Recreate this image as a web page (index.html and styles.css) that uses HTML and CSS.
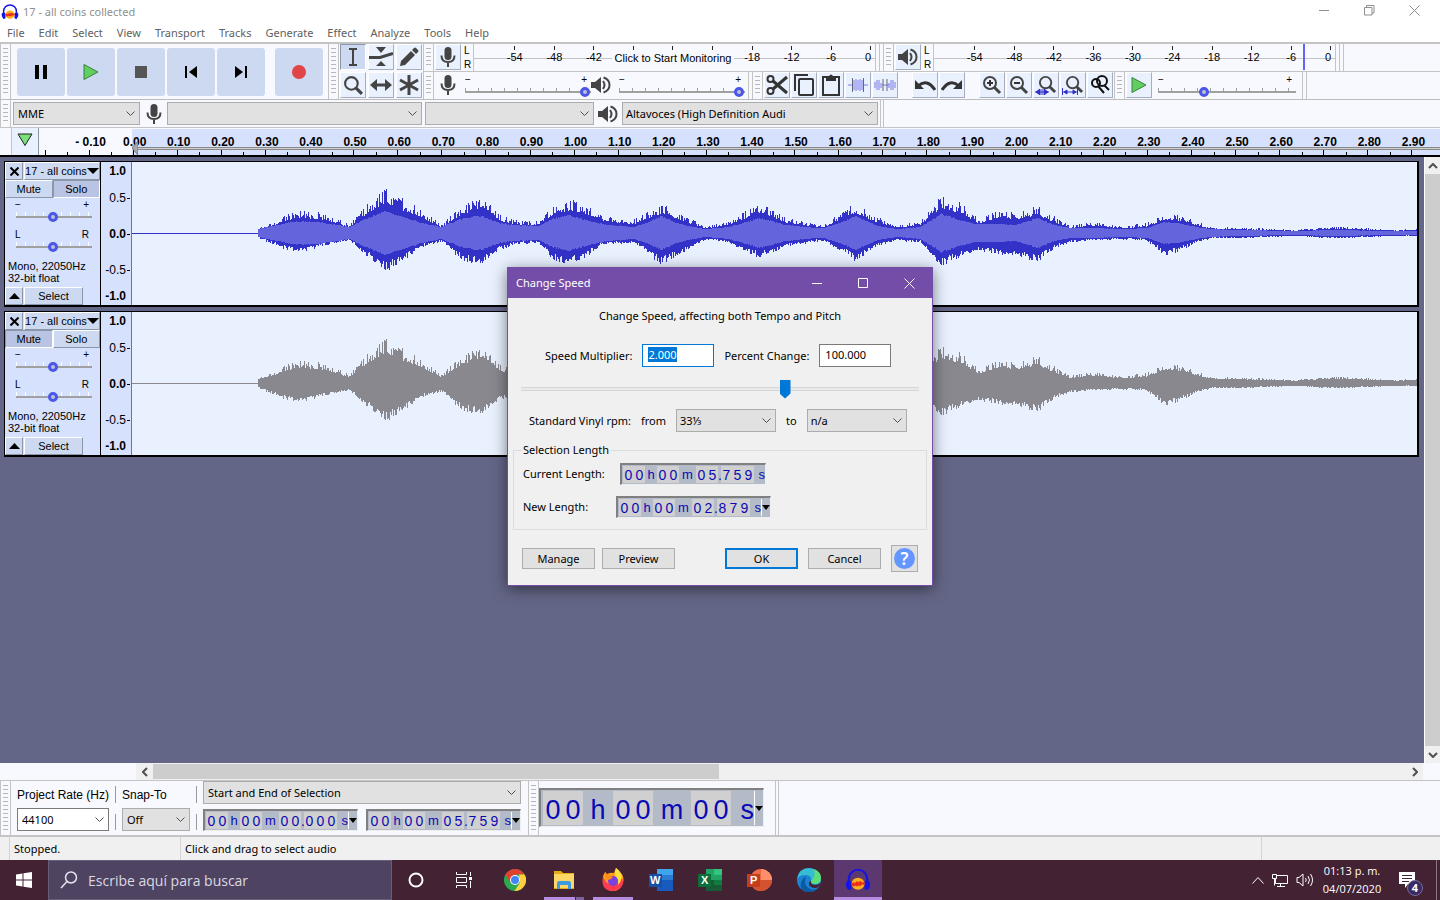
FILE: index.html
```html
<!DOCTYPE html>
<html lang="en">
<head>
    <meta charset="UTF-8">
    <meta name="viewport" content="width=device-width, initial-scale=1.0">
    <title>17 - all coins collected</title>
    <link rel="stylesheet" href="styles.css">
</head>
<body>

<!-- shared icons -->
<svg class="sprite" aria-hidden="true">
    <symbol id="i-audacity" viewBox="0 0 24 24">
        <path d="M3.500 16V11a8.500 8.500 0 0 1 17 0v5" fill="none" stroke="#1414e6" stroke-width="2"/>
        <path d="M1 14q3-3 5 0v6q-2 2-3 1-3-3-2-7zM23 14q-3-3-5 0v6q2 2 3 1 3-3 2-7z" fill="#1414e6"/>
        <ellipse cx="12" cy="15.500" rx="6" ry="5.500" fill="#f9b01c"/>
        <path d="M6 15l2-1 1 1 2-2 1 1 2-1 2 1 2 0v3l-2-1-2 2-1-1-2 1-1-1-2 1-2-1z" fill="#f0301c"/>
    </symbol>
    <symbol id="i-mic" viewBox="0 0 16 20">
        <rect x="4.500" y="0" width="7" height="13" rx="3.500" fill="#444"/>
        <path d="M1.500 8.500q0 6.500 6.500 6.500t6.500-6.500M8 15v5" fill="none" stroke="#444" stroke-width="2"/>
    </symbol>
    <symbol id="i-speaker" viewBox="0 0 20 18">
        <path d="M0 6h4l6-5v16l-6-5H0z" fill="#444"/>
        <path d="M12 5q3 4 0 8M12.500 1.500q6 2 6 7.500t-6 7.500" fill="none" stroke="#444" stroke-width="2"/>
    </symbol>
    <symbol id="i-play" viewBox="0 0 16 18">
        <path d="M1 1.500L15 9 1 16.500z" fill="#5fcf5f" stroke="#3f7f3f"/>
    </symbol>
    <symbol id="i-lens" viewBox="0 0 20 20">
        <circle cx="8" cy="8" r="6" fill="none" stroke="#444" stroke-width="2"/>
        <path d="M12 12l6 6" stroke="#444" stroke-width="3"/>
    </symbol>
    <symbol id="i-up" viewBox="0 0 10 6">
        <path d="M1 5l4-4 4 4" fill="none" stroke="#505050" stroke-width="2"/>
    </symbol>
</svg>

<header class="titlebar">
    <svg width="18" height="18"><use href="#i-audacity"/></svg>
    <span class="app-title">17 - all coins collected</span>
    <div class="window-buttons">
        <button aria-label="Minimize"><svg width="11" height="11"><path d="M0 5.500h10"/></svg></button>
        <button aria-label="Restore"><svg width="11" height="11"><path d="M.5 2.500h7.500v7.500H.5zM2.500 2.500V.5H10v7.500H8"/></svg></button>
        <button aria-label="Close"><svg width="11" height="11"><path d="M.5 .5l10 10M10.500 .5l-10 10"/></svg></button>
    </div>
</header>

<nav class="menubar">
    <a href="#">File</a><a href="#">Edit</a><a href="#">Select</a><a href="#">View</a><a href="#">Transport</a><a href="#">Tracks</a><a href="#">Generate</a><a href="#">Effect</a><a href="#">Analyze</a><a href="#">Tools</a><a href="#">Help</a>
</nav>

<div class="toolbars">
    <div class="grip"></div>
    <div class="transport">
        <button aria-label="Pause"><svg width="14" height="14"><path d="M1 0h4v14H1zM9 0h4v14H9z"/></svg></button>
        <button aria-label="Play"><svg width="16" height="18"><use href="#i-play"/></svg></button>
        <button aria-label="Stop"><svg width="12" height="12"><path d="M0 0h12v12H0z" fill="#555"/></svg></button>
        <button aria-label="Skip to start"><svg width="14" height="14"><path d="M1 1h2v12H1zM13 1v12L5 7z"/></svg></button>
        <button aria-label="Skip to end"><svg width="14" height="14"><path d="M11 1h2v12h-2zM1 1v12l8-6z"/></svg></button>
        <button class="record" aria-label="Record"><svg width="14" height="14"><circle cx="7" cy="7" r="7" fill="#e14545"/></svg></button>
    </div>
    <div class="grip"></div>
    <div class="tools">
        <button class="tool pressed" aria-label="Selection"><svg width="12" height="18"><path d="M2 1h3l1 1 1-1h3M6 2v14M2 17h3l1-1 1 1h3" fill="none" stroke="#444" stroke-width="2"/></svg></button>
        <button class="tool" aria-label="Envelope"><svg width="24" height="20"><path d="M7 0h10l-5 6zM12 14l5 5H7z" fill="#444"/><path d="M0 10.500h11l13-4" fill="none" stroke="#444" stroke-width="3"/></svg></button>
        <button class="tool" aria-label="Draw"><svg width="20" height="20"><path d="M1 19l1-5L12 4l4 4L6 18zM13 3l2-2q1-1 2 0l2 2q1 1 0 2l-2 2z" fill="#444"/></svg></button>
        <button class="tool" aria-label="Zoom"><svg width="21" height="21"><use href="#i-lens"/></svg></button>
        <button class="tool" aria-label="Time shift"><svg width="22" height="14"><path d="M0 7l7-6v12zM22 7l-7-6v12z" fill="#444"/><path d="M5 7h12" stroke="#444" stroke-width="3"/></svg></button>
        <button class="tool" aria-label="Multi-tool"><svg width="20" height="20"><path d="M10 0v20M1 5l18 10M19 5L1 15" stroke="#444" stroke-width="3"/></svg></button>
    </div>
    <div class="toolbar-rows">
        <div class="toolbar-row">
            <div class="grip"></div>
            <button class="tool" aria-label="Recording meter"><svg width="16" height="20"><use href="#i-mic"/></svg></button>
            <div class="channels"><span>L</span><span>R</span></div>
            <div class="meter">
                <span>-54</span><span>-48</span><span>-42</span><span></span><span></span><span></span><span>-18</span><span>-12</span><span>-6</span><span>0</span>
                <button class="monitor">Click to Start Monitoring</button>
            </div>
            <div class="dock-line"></div>
            <div class="grip"></div>
            <button class="tool" aria-label="Playback meter"><svg width="20" height="18"><use href="#i-speaker"/></svg></button>
            <div class="channels"><span>L</span><span>R</span></div>
            <div class="meter">
                <span>-54</span><span>-48</span><span>-42</span><span>-36</span><span>-30</span><span>-24</span><span>-18</span><span>-12</span><span>-6</span><span>0</span>
                <i class="peak"></i>
            </div>
            <div class="dock-line"></div><div class="dock-edge"></div>
        </div>
        <div class="toolbar-row">
            <div class="grip"></div>
            <svg class="mixer-icon" width="16" height="20"><use href="#i-mic"/></svg>
            <label class="slider mixer"><span>−</span><span>+</span><input type="range" min="0" max="100" value="99" aria-label="Recording volume"></label>
            <svg class="mixer-speaker" width="20" height="18"><use href="#i-speaker"/></svg>
            <label class="slider mixer"><span>−</span><span>+</span><input type="range" min="0" max="100" value="99" aria-label="Playback volume"></label>
            <div class="dock-line"></div>
            <div class="grip"></div>
            <div class="edit-tools">
                <button class="tool" aria-label="Cut"><svg width="22" height="20" fill="none" stroke="#333" stroke-width="2"><circle cx="4.500" cy="4" r="3"/><circle cx="4.500" cy="16" r="3"/><path d="M7 6l14 12M7 14L21 2" stroke-width="3"/></svg></button>
                <button class="tool" aria-label="Copy"><svg width="20" height="22" fill="none" stroke="#333" stroke-width="2"><path d="M1 17V1h13M6 5h12q1 0 1 1v14q0 1-1 1H6q-1 0-1-1V6q0-1 1-1z"/></svg></button>
                <button class="tool" aria-label="Paste"><svg width="18" height="22" fill="none" stroke="#333" stroke-width="2"><path d="M1 3h16v18H1z"/><path d="M4 2h3q2-3 4 0h3v5H4z" fill="#333" stroke="none"/></svg></button>
                <button class="tool" aria-label="Trim"><svg width="20" height="14" fill="none"><path d="M0 7h4M16 7h4M6 2v10M8 1v12M10 2v10M12 1v12M14 2v10" stroke="#7a7ae8"/><path d="M4.500 0v14M15.500 0v14" stroke="#667"/></svg></button>
                <button class="tool" aria-label="Silence"><svg width="22" height="14" fill="none"><path d="M1 4v6M3 2v10M5 2v10M7 5v5M15 5v5M17 2v10M19 2v10M21 4v6M8 7h7" stroke="#7a7ae8"/><path d="M9 1v12M13 1v12" stroke="#667"/></svg></button>
            </div>
            <div class="edit-tools">
                <button class="tool" aria-label="Undo"><svg width="22" height="14"><path d="M1 2v9h9z" fill="#333"/><path d="M4 8q9-8 17 4" fill="none" stroke="#333" stroke-width="3"/></svg></button>
                <button class="tool" aria-label="Redo"><svg width="22" height="14"><path d="M21 2v9h-9z" fill="#333"/><path d="M18 8q-9-8-17 4" fill="none" stroke="#333" stroke-width="3"/></svg></button>
            </div>
            <div class="edit-tools">
                <button class="tool" aria-label="Zoom in"><svg width="20" height="20"><use href="#i-lens"/><path d="M5 8h6M8 5v6" stroke="#333" stroke-width="2"/></svg></button>
                <button class="tool" aria-label="Zoom out"><svg width="20" height="20"><use href="#i-lens"/><path d="M5 8h6" stroke="#333" stroke-width="2"/></svg></button>
                <button class="tool" aria-label="Fit selection"><svg width="22" height="20"><use href="#i-lens" x="3" width="19" height="19"/><path d="M1 17l4-3v6zM13 17l-4-3v6zM0 17h14M7 14v6" fill="#3030c8" stroke="#3030c8"/></svg></button>
                <button class="tool" aria-label="Fit project"><svg width="22" height="20"><use href="#i-lens" x="3" width="19" height="19"/><path d="M.5 13v7M15.500 13v7M1 17h14M2 17l3-2v4zM14 17l-3-2v4z" fill="#3030c8" stroke="#3030c8"/></svg></button>
                <button class="tool" aria-label="Zoom toggle"><svg width="20" height="20" fill="none" stroke="#111" stroke-width="2"><circle cx="6" cy="8" r="4"/><circle cx="12" cy="6" r="5"/><path d="M8 11l6 7M14 10l5 5"/></svg></button>
            </div>
            <div class="grip"></div>
            <button class="tool" aria-label="Play at speed"><svg width="16" height="18"><use href="#i-play"/></svg></button>
            <label class="slider mixer speed"><span>−</span><span>+</span><input type="range" min="0" max="100" value="32" aria-label="Playback speed"></label>
            <div class="dock-line"></div><div class="dock-edge"></div>
        </div>
    </div>
</div>

<div class="devices">
    <div class="grip"></div>
    <select class="host" aria-label="Audio host"><option>MME</option></select>
    <svg width="16" height="20"><use href="#i-mic"/></svg>
    <select class="rec-device" aria-label="Recording device"><option></option></select>
    <select class="rec-channels" aria-label="Recording channels"><option></option></select>
    <svg width="20" height="18"><use href="#i-speaker"/></svg>
    <select class="play-device" aria-label="Playback device"><option>Altavoces (High Definition Audi</option></select>
    <div class="dock-edge"></div><div class="dock-edge"></div>
</div>

<div class="timeline">
    <div class="timeline-grip"></div>
    <button class="pin" aria-label="Pinned play head"><svg width="16" height="14"><path d="M1 1h14L8 12.500z" fill="#7be07b" stroke="#222"/></svg></button>
    <div class="timeline-ruler">
        <div class="ruler-labels" id="timeRuler"></div>
        <svg class="play-start" width="6" height="14"><path d="M6 0v14L0 7z" fill="#aaa" stroke="#777"/></svg>
    </div>
</div>

<main class="workspace">
    <div class="tracks">
        <section class="track">
            <div class="track-panel">
                <div class="panel-row">
                    <button class="panel-btn close" aria-label="Close track"><svg width="9" height="9"><path d="M.5 .5l8 8M8.500 .5l-8 8" stroke="#000" stroke-width="2"/></svg></button>
                    <button class="panel-btn name">17 - all coins<svg width="12" height="6"><path d="M0 0h12L6 6z"/></svg></button>
                </div>
                <div class="panel-row">
                    <button class="panel-btn half">Mute</button>
                    <button class="panel-btn half down">Solo</button>
                </div>
                <label class="slider"><span>−</span><span>+</span><input type="range" value="49" aria-label="Gain"></label>
                <label class="slider pan"><span>L</span><span>R</span><input type="range" value="49" aria-label="Pan"></label>
                <p>Mono, 22050Hz<br>32-bit float</p>
                <div class="panel-row">
                    <button class="panel-btn close" aria-label="Collapse"><svg width="11" height="6"><path d="M0 6h11L5.500 0z"/></svg></button>
                    <button class="panel-btn select">Select</button>
                </div>
            </div>
            <div class="level-ruler"><b>1.0</b><span>0.5</span><b>0.0</b><span>-0.5</span><b>-1.0</b></div>
            <svg class="wave" viewBox="0 0 1285 143" preserveAspectRatio="none"></svg>
        </section>
        <section class="track">
            <div class="track-panel">
                <div class="panel-row">
                    <button class="panel-btn close" aria-label="Close track"><svg width="9" height="9"><path d="M.5 .5l8 8M8.500 .5l-8 8" stroke="#000" stroke-width="2"/></svg></button>
                    <button class="panel-btn name">17 - all coins<svg width="12" height="6"><path d="M0 0h12L6 6z"/></svg></button>
                </div>
                <div class="panel-row">
                    <button class="panel-btn half down">Mute</button>
                    <button class="panel-btn half">Solo</button>
                </div>
                <label class="slider"><span>−</span><span>+</span><input type="range" value="49" aria-label="Gain"></label>
                <label class="slider pan"><span>L</span><span>R</span><input type="range" value="49" aria-label="Pan"></label>
                <p>Mono, 22050Hz<br>32-bit float</p>
                <div class="panel-row">
                    <button class="panel-btn close" aria-label="Collapse"><svg width="11" height="6"><path d="M0 6h11L5.500 0z"/></svg></button>
                    <button class="panel-btn select">Select</button>
                </div>
            </div>
            <div class="level-ruler"><b>1.0</b><span>0.5</span><b>0.0</b><span>-0.5</span><b>-1.0</b></div>
            <svg class="wave muted" viewBox="0 0 1285 143" preserveAspectRatio="none"></svg>
        </section>
    </div>
    <div class="vscroll">
        <button aria-label="Scroll up"><svg width="10" height="6"><use href="#i-up"/></svg></button>
        <div class="vthumb"></div>
        <button class="flip" aria-label="Scroll down"><svg width="10" height="6"><use href="#i-up"/></svg></button>
    </div>
</main>

<div class="hscroll">
    <button class="left" aria-label="Scroll left"><svg width="10" height="6"><use href="#i-up"/></svg></button>
    <div class="hthumb"></div>
    <button class="right" aria-label="Scroll right"><svg width="10" height="6"><use href="#i-up"/></svg></button>
</div>

<div class="selection-bar">
    <div class="grip"></div>
    <div class="field rate">
        <label for="rate">Project Rate (Hz)</label>
        <select id="rate" class="white"><option>44100</option></select>
    </div>
    <div class="divider"></div>
    <div class="field snap">
        <label for="snap">Snap-To</label>
        <select id="snap"><option>Off</option></select>
    </div>
    <div class="divider"></div>
    <div class="field range">
        <select aria-label="Selection mode"><option>Start and End of Selection</option></select>
        <div class="times">
            <div class="time" data-value="00h00m00.000s" data-menu="1"></div>
            <div class="time" data-value="00h00m05.759s" data-menu="1"></div>
        </div>
    </div>
    <div class="grip"></div>
    <div class="time big" data-value="00h00m00s" data-menu="1"></div>
    <div class="dock-edge"></div><div class="dock-edge"></div>
</div>

<footer class="statusbar">
    <span class="state">Stopped.</span>
    <span class="hint">Click and drag to select audio</span>
    <span class="extra"></span>
</footer>

<div class="taskbar">
    <button class="start" aria-label="Start"><svg width="16" height="16" fill="#fff"><path d="M0 2.500l6.500-1v6H0zM7.500 1.300L16 0v7.500H7.500zM0 8.500h6.500v6L0 13.500zM7.500 8.500H16V16l-8.500-1.300z"/></svg></button>
    <label class="search">
        <svg width="18" height="18" fill="none" stroke="#e8e4ee" stroke-width="1.500"><circle cx="11" cy="6.500" r="5.500"/><path d="M7 10.500L1 17"/></svg>
        <input type="text" placeholder="Escribe aquí para buscar">
    </label>
    <button class="app" aria-label="Cortana"><svg width="18" height="18"><circle cx="9" cy="9" r="6.500" fill="none" stroke="#fff" stroke-width="2"/></svg></button>
    <button class="app view" aria-label="Task view"><svg width="18" height="16" fill="none" stroke="#fff"><path d="M1.500 0v2.500h10V0M1.500 5.500h10v5h-10zM1.500 16v-2.500h10V16M15.500 0v4M15.500 9v7"/><path d="M14 5h3v3h-3z" fill="#fff" stroke="none"/></svg></button>
    <button class="app" aria-label="Chrome"><svg width="22" height="22" viewBox="0 0 22 22"><circle cx="11" cy="11" r="11" fill="#2da94f"/><path d="M1.500 5.500A11 11 0 0 1 20.500 5.500H11l-5 8z" fill="#e2402f"/><path d="M20.500 5.500A11 11 0 0 1 10.500 22l5.500-8.500-1-8z" fill="#fdd23e"/><circle cx="11" cy="11" r="5" fill="#fff"/><circle cx="11" cy="11" r="4" fill="#4285f4"/></svg></button>
    <button class="app open stacked" aria-label="File Explorer"><svg width="22" height="20"><path d="M1 1h7l2 2h11v16H1z" fill="#e8a916"/><path d="M1 4h20v14H1z" fill="#fcd667"/><path d="M4 19v-6q0-2 2-2h10q2 0 2 2v6h-3v-4H7v4z" fill="#3f9be0"/></svg></button>
    <button class="app open" aria-label="Firefox"><svg width="24" height="24" viewBox="0 0 24 24"><path d="M2 8l2-4 2 2q4-2 7-1l2-5q3 3 4 5l2 1q3 6 0 11-3 6-9 6T3 18q-2-5-1-10z" fill="#ff9c1a"/><path d="M2 8q1 5 6 8 5 2 9-2 3-4 0-8 6 5 5 10-3 7-10 7Q3 23 1.500 15z" fill="#ff3b51"/><path d="M15 0q5 3 6 9-1 5-4 8 1-6-3-9-1-4 1-8z" fill="#ffdf3d"/><circle cx="12" cy="13" r="5" fill="#7b41dd"/><path d="M4 4q3 4 8 5-2 3-5 3-3-3-3-8z" fill="#ff8a16"/></svg></button>
    <button class="app" aria-label="Word"><svg width="26" height="22"><path d="M8 0h16v22H8z" fill="#185abd"/><path d="M8 0h16v6H8z" fill="#41a5ee"/><path d="M8 6h16v5H8z" fill="#2b7cd3"/><path d="M0 5h13v13H0z" fill="#1550a8"/><text x="1" y="15" class="office">W</text></svg></button>
    <button class="app" aria-label="Excel"><svg width="26" height="22"><path d="M8 0h16v22H8z" fill="#21a366"/><path d="M16 0h8v6h-8z" fill="#33c481"/><path d="M8 11h16v11H8z" fill="#185c37"/><path d="M16 11h8v5h-8z" fill="#107c41"/><path d="M0 5h13v13H0z" fill="#0e6e39"/><text x="3" y="15" class="office">X</text></svg></button>
    <button class="app" aria-label="PowerPoint"><svg width="26" height="22"><circle cx="14" cy="11" r="11" fill="#ed6c47"/><path d="M14 0a11 11 0 0 1 11 11H14z" fill="#ff8f6b"/><path d="M25 11a11 11 0 0 1-22 0z" fill="#d35230"/><path d="M0 5h13v13H0z" fill="#c43e1c"/><text x="3" y="15" class="office">P</text></svg></button>
    <button class="app" aria-label="Edge"><svg width="24" height="24" viewBox="0 0 24 24"><circle cx="12" cy="12" r="12" fill="#1b84d2"/><path d="M0 11Q2 0 12 0q11 1 12 10 0 6-6 6-5 0-4-3 1-6-5-6-7 0-9 4z" fill="#35bdd4"/><path d="M17 1q7 3 7 9 0 6-6 6-4 0-4-3 5-4 3-12z" fill="#5fdd79"/><path d="M9 9q-3 8 4 12 4 2 8-1-4 5-11 4-8-2-6-9 1-5 5-6z" fill="#0c59a4"/><path d="M14 13q-1 4 5 4 3 0 5-3-1 5-5 6-8 0-7-6z" fill="#432234"/></svg></button>
    <button class="app open active" aria-label="Audacity"><svg width="26" height="26"><use href="#i-audacity"/></svg></button>
    <div class="tray">
        <svg width="12" height="7" fill="none" stroke="#fff"><path d="M.5 6.500l5.500-6 5.500 6"/></svg>
        <svg width="18" height="14" fill="none" stroke="#fff"><path d="M5 2.500h11.500v8H4.500V6M1.500 1.500h4v4h-4zM3.500 5v7.500M9.500 10v3M6 13.500h8"/></svg>
        <svg width="18" height="14" fill="none" stroke="#fff"><path d="M1 4.500h2l4-3.500v12L3 9.500H1zM9.500 5q1.500 2 0 4M12 3q3 4 0 8M14.500 1q4 6 0 12"/></svg>
    </div>
    <div class="clock"><span>01:13 p. m.</span><span>04/07/2020</span></div>
    <button class="notifications" aria-label="Notifications">
        <svg width="18" height="17"><path d="M0 0h16v12H9l-3 4v-4H0z" fill="#fff"/><path d="M3 3.500h10M3 6.500h10M3 9.500h7" stroke="#432234"/></svg>
        <span class="badge">4</span>
    </button>
    <div class="show-desktop"></div>
</div>

<form class="dialog" role="dialog" aria-label="Change Speed" onsubmit="return false">
    <div class="dialog-title">
        <span>Change Speed</span>
        <div class="dialog-buttons">
            <button type="button" aria-label="Minimize"><svg width="11" height="11"><path d="M0 5.500h10"/></svg></button>
            <button type="button" aria-label="Maximize"><svg width="11" height="11"><path d="M.5 .5h9v9h-9z"/></svg></button>
            <button type="button" aria-label="Close"><svg width="11" height="11"><path d="M.5 .5l10 10M10.500 .5l-10 10"/></svg></button>
        </div>
    </div>
    <p class="dialog-heading">Change Speed, affecting both Tempo and Pitch</p>
    <div class="dialog-row">
        <label for="multiplier">Speed Multiplier:</label>
        <input type="text" id="multiplier" value="2.000">
        <label for="percent">Percent Change:</label>
        <input type="text" id="percent" value="100.000">
    </div>
    <input type="range" class="speed-range" min="0" max="1000" value="668" aria-label="Percent change">
    <div class="dialog-row rpm">
        <span>Standard Vinyl rpm:</span>
        <label for="rpmFrom">from</label>
        <select id="rpmFrom"><option>33⅓</option></select>
        <label for="rpmTo">to</label>
        <select id="rpmTo"><option>n/a</option></select>
    </div>
    <fieldset>
        <legend>Selection Length</legend>
        <div class="length-row"><span>Current Length:</span><div class="time" data-value="00h00m05.759s"></div></div>
        <div class="length-row new"><span>New Length:</span><div class="time" data-value="00h00m02.879s" data-menu="1"></div></div>
    </fieldset>
    <div class="actions">
        <button type="button">Manage</button>
        <button type="button">Preview</button>
        <button type="submit" class="ok">OK</button>
        <button type="button">Cancel</button>
        <button type="button" class="help" aria-label="Help"><span>?</span></button>
    </div>
</form>

<script src="script.js"></script>
</body>
</html>
```
FILE: styles.css
```css
* {
    box-sizing: border-box;
}
body {
    margin: 0;
    min-height: 100vh;
    display: flex;
    flex-direction: column;
    position: relative;
    background-color: #f8f9ff;
    color: #000;
    font: 11px/14px "Noto Sans", "Open Sans", sans-serif;
    overflow-x: hidden;
}
button, input, select {
    font: inherit;
    color: inherit;
    margin: 0;
    padding: 0;
    border: none;
    border-radius: 0;
    background: none;
}
button {
    display: flex;
    align-items: center;
    justify-content: center;
}
svg {
    display: block;
    flex: none;
}
.sprite {
    position: absolute;
    width: 0;
    height: 0;
}

/* title and menu */
.titlebar {
    display: flex;
    align-items: center;
    height: 24px;
    padding: 0 20px 0 1px;
    background-color: #fff;
    color: #8f8f8f;
}
.app-title {
    margin-left: 4px;
}
.window-buttons {
    display: flex;
    gap: 34px;
    margin-left: auto;
    padding-bottom: 4px;
}
.window-buttons svg {
    fill: none;
    stroke: #8f8f8f;
}
.menubar {
    display: flex;
    gap: 14px;
    height: 18px;
    padding: 2px 7px 0;
    background-color: #fff;
}
.menubar a {
    color: #606060;
    text-decoration: none;
}

/* toolbars */
.toolbars {
    display: flex;
    height: 58px;
    border-top: 2px solid #c4c4c4;
    border-bottom: 1px solid #bcbcbc;
}
.grip {
    flex: none;
    width: 11px;
    border: solid #c4c4c4;
    border-width: 0 1px;
    background: repeating-linear-gradient(#b8b8b8 0 1px, transparent 1px 4px) content-box;
    padding: 4px 2px;
}
.transport {
    display: flex;
    align-items: center;
    gap: 2px;
    padding: 0 5px 0 6px;
}
.transport button {
    width: 48px;
    height: 48px;
    border-radius: 3px;
    background-color: #ccd9f1;
}
.transport .record {
    margin-left: 8px;
}
.tools {
    display: grid;
    grid-template-columns: repeat(3, 26px);
    grid-template-rows: 26px 26px;
    gap: 2px;
    padding-left: 1px;
    margin-right: 1px;
}
.tool {
    flex: none;
    width: 26px;
    height: 26px;
    background-color: #e9f0fe;
    border: 1px solid #a4aec0;
    border-top-color: #fff;
    border-left-color: #fff;
}
.tool.pressed {
    background-color: #ccd9f1;
    border-color: #8c96aa #fff #fff #8c96aa;
}
.toolbar-rows {
    flex: 1;
}
.toolbar-row {
    display: flex;
    height: 27px;
}
.toolbar-row:first-child {
    height: 28px;
    border-bottom: 1px solid #c4c4c4;
}
.toolbar-row .grip {
    margin-right: 1px;
}
.channels {
    display: flex;
    flex-direction: column;
    justify-content: space-between;
    width: 12px;
    padding-left: 3px;
    font: 10px/13px "Liberation Sans", sans-serif;
}
.meter {
    position: relative;
    display: grid;
    grid-template-columns: repeat(9, 1fr) 24px;
    width: 403px;
    padding-left: 21px;
    border: solid #c4c4c4;
    border-width: 0 1px;
    font: 11px/14px "Liberation Sans", sans-serif;
    text-align: center;
    background: linear-gradient(#c4c4c4, #c4c4c4) 0 14px / 100% 1px no-repeat;
}
.meter > span {
    padding-top: 6px;
    background: linear-gradient(#222, #222) 50% 2px / 1px 4px no-repeat;
}
.meter > span:last-of-type {
    padding-right: 4px;
    text-align: right;
    background-position: 19px 2px;
}
.monitor {
    position: absolute;
    left: 138px;
    top: 7px;
    width: 122px;
    background-color: #f8f9ff;
}
.peak {
    position: absolute;
    right: 30px;
    top: 0;
    width: 2px;
    height: 26px;
    background-color: #6464f5;
}
.dock-line {
    width: 4px;
    margin-left: 3px;
    border-left: 1px solid #c4c4c4;
}
.dock-edge {
    width: 3px;
    border-left: 1px solid #c4c4c4;
}
.mixer-icon {
    margin: 3px 9px 0 5px;
}
.mixer-speaker {
    margin: 4px 8px 0 0;
}
.edit-tools {
    display: flex;
    gap: 1px;
    margin-right: 14px;
}
.edit-tools:nth-last-of-type(4) {
    margin-right: 1px;
}

/* small ruler sliders */
.slider {
    display: flex;
    flex-wrap: wrap;
    justify-content: space-between;
    align-content: flex-start;
    width: 76px;
    font: 10px/10px "Liberation Sans", sans-serif;
}
.slider input {
    appearance: none;
    width: 100%;
    height: 12px;
    background:
        linear-gradient(#a0a0a0, #a0a0a0) 0 6px / 100% 2px no-repeat,
        repeating-linear-gradient(90deg, #fff 0 1px, transparent 1px 9px) 0 2px / 100% 4px no-repeat;
}
.slider input::-webkit-slider-thumb {
    appearance: none;
    width: 10px;
    height: 10px;
    margin-top: 2px;
    border-radius: 50%;
    border: 3px solid #4a55ea;
    background-color: #c0c0d0;
}
.slider.mixer {
    width: 126px;
    padding-top: 3px;
}
.slider.mixer span:last-of-type {
    margin-right: 4px;
}
.slider.mixer input {
    background:
        linear-gradient(#a0a0a0, #a0a0a0) 0 6px / 100% 2px no-repeat,
        repeating-linear-gradient(90deg, #a0a0a0 0 1px, transparent 1px 13px) 0 3px / 100% 3px no-repeat;
}
.slider.speed {
    width: 138px;
    margin: 0 3px 0 6px;
}

/* device toolbar */
select {
    appearance: none;
    height: 23px;
    padding: 0 4px;
    border: 1px solid #acacac;
    color: #000;
    background: #e1e1e1 url("data:image/svg+xml,%3Csvg xmlns='http://www.w3.org/2000/svg' width='9' height='6'%3E%3Cpath d='M.5 .5l4 4 4-4' fill='none' stroke='%23505050'/%3E%3C/svg%3E") right 4px center no-repeat;
}
select.white {
    background-color: #fff;
    border-color: #7a7a7a;
}
.devices {
    display: flex;
    align-items: center;
    height: 28px;
    border-bottom: 1px solid #c4c4c4;
}
.devices > .grip, .devices > .dock-edge {
    align-self: stretch;
}
.host {
    width: 127px;
    margin: 0 6px 0 2px;
}
.rec-device {
    width: 255px;
    margin: 0 3px 0 5px;
}
.rec-channels {
    width: 169px;
    margin-right: 4px;
}
.play-device {
    width: 256px;
    margin: 0 2px 0 4px;
    padding-left: 3px;
}

/* timeline */
.timeline {
    display: flex;
    height: 29px;
    border-bottom: 2px solid #000;
}
.timeline-grip {
    width: 12px;
    border-right: 1px solid #c4c4c4;
}
.pin {
    width: 27px;
    padding-bottom: 3px;
    background-color: #e9f0fe;
    border-right: 1px solid #8c96aa;
}
.timeline-ruler {
    position: relative;
    flex: 1;
    padding: 0 6px 0 28px;
    background:
        linear-gradient(#000, #000) 6px 100% / 1px 5px no-repeat,
        linear-gradient(#888 0 1px, #d0d0d0 1px 2px, #888 2px 3px) 99px 19px / 100% 3px no-repeat,
        linear-gradient(#d5e1fd, #d5e1fd) 93px 1px no-repeat;
}
.ruler-labels {
    display: grid;
    grid-template-columns: repeat(31, 1fr);
    height: 100%;
}
.ruler-labels span {
    padding: 7px 0 0 3px;
    font: bold 12px/14px "Liberation Sans", sans-serif;
    text-align: center;
    white-space: nowrap;
    background:
        linear-gradient(#000, #000) 50% 100% / 1px 5px no-repeat,
        linear-gradient(#000, #000) 0 100% / 1px 3px no-repeat;
}
.play-start {
    position: absolute;
    left: 93px;
    top: 13px;
}

/* tracks */
.workspace {
    flex: 1;
    display: flex;
    background-color: #646687;
}
.tracks {
    flex: 1;
    display: flex;
    flex-direction: column;
    gap: 4px;
    padding: 4px 5px 4px 4px;
}
.track {
    display: flex;
    height: 146px;
    border: solid #000;
    border-width: 1px 2px 2px 1px;
    background-color: #e9f1ff;
}
.track-panel {
    width: 96px;
    border-right: 1px solid #000;
    background-color: #d5e1fd;
    font: 11px/12px "Liberation Sans", sans-serif;
}
.panel-row {
    display: flex;
}
.panel-btn {
    height: 18px;
    border: 1px solid #8c96aa;
    border-top-color: #fff;
    border-left-color: #fff;
    background-color: #ccd9f1;
    white-space: nowrap;
}
.panel-btn.close {
    width: 18px;
    margin-right: 1px;
}
.panel-btn.name {
    flex: 1;
}
.panel-btn.half {
    width: 48px;
}
.panel-btn.down {
    background-color: #b9c3e4;
    border-color: #8c96aa #fff #fff #8c96aa;
}
.panel-btn.select {
    width: 59px;
}
.track .slider {
    margin: 2px 0 6px 11px;
}
.track .slider span:first-child {
    margin-left: -1px;
}
.track .slider span:last-of-type {
    margin-right: 3px;
}
.track .slider.pan {
    margin-bottom: 8px;
    padding-top: 2px;
}
.track-panel p {
    margin: 0 0 3px 3px;
}
.level-ruler {
    display: grid;
    grid-template-rows: 18px 35px 37px 35px 18px;
    align-items: center;
    width: 31px;
    padding-right: 5px;
    border-right: 1px solid #777;
    background-color: #d5e1fd;
    font: 12px/14px "Liberation Sans", sans-serif;
    text-align: right;
}
.level-ruler span, .level-ruler b:nth-child(3) {
    margin-right: -4px;
    padding-right: 4px;
    background: linear-gradient(#000, #000) 100% 7px / 3px 1px no-repeat;
}
.wave {
    flex: 1;
    min-width: 0;
    height: 143px;
}
.wave .peaks {
    fill: #3232c8;
}
.wave .rms {
    fill: #6464dc;
}
.wave.muted path {
    fill: #88888e;
}

/* scrollbars */
.vscroll {
    display: flex;
    flex-direction: column;
    width: 17px;
    border-left: 1px solid #fff;
    background-color: #f0f0f0;
}
.vscroll button {
    height: 17px;
}
.vthumb {
    flex: 1;
    background-color: #cdcdcd;
}
.flip svg {
    transform: rotate(180deg);
}
.hscroll {
    display: flex;
    height: 17px;
    margin: 0 17px 0 136px;
    padding: 1px 0;
    background-color: #f0f0f0;
}
.hscroll button {
    width: 17px;
}
.hscroll .left svg {
    transform: rotate(-90deg);
}
.hscroll .right {
    margin-left: auto;
}
.hscroll .right svg {
    transform: rotate(90deg);
}
.hthumb {
    width: 44%;
    background-color: #cdcdcd;
}

/* selection toolbar */
.selection-bar {
    display: flex;
    height: 57px;
    border-top: 1px solid #c4c4c4;
    border-bottom: 2px solid #c4c4c4;
}
.field {
    display: flex;
    flex-direction: column;
    justify-content: space-between;
    padding-bottom: 4px;
}
.field label {
    padding-top: 6px;
    font: 12px/16px "Liberation Sans", sans-serif;
    white-space: nowrap;
}
.rate {
    width: 92px;
    margin-left: 6px;
}
.snap {
    width: 68px;
}
.divider {
    width: 1px;
    margin: 5px 6px;
    background: linear-gradient(#999 0 17px, transparent 17px 28px, #999 28px 100%);
}
.range {
    width: 318px;
    margin-right: 7px;
}
.times {
    display: flex;
    justify-content: space-between;
}

/* time counters */
.time {
    display: flex;
    width: max-content;
    height: 22px;
    padding: 1px 0 1px 1px;
    border: 2px solid #808080;
    border-width: 2px 1px 1px 2px;
    border-right-color: #eee;
    border-bottom-color: #eee;
    background-color: #b4bbc8;
    color: #0a0ab4;
    font: 14px/18px "Liberation Sans", sans-serif;
    text-align: center;
}
.time .digit {
    width: 11px;
    background-color: #d0d0d0;
}
.time .h {
    width: 12px;
}
.time .m {
    width: 17px;
}
.time .s {
    width: 11px;
    text-align: right;
}
.time .h, .time .m, .time .s {
    font-size: 13px;
}
.time .dot {
    width: 3px;
}
.time button {
    width: 9px;
    border-left: 1px solid #fff;
}
.time.big {
    height: 39px;
    margin: 7px 11px 0 0;
    padding-left: 2px;
    font: 27px/38px "Liberation Sans", sans-serif;
}
.time.big .digit {
    width: 20px;
}
.time.big .h {
    width: 30px;
    font-size: 27px;
}
.time.big .m {
    width: 38px;
    font-size: 27px;
}
.time.big .s {
    width: 23px;
    font-size: 27px;
}

.statusbar {
    display: flex;
    height: 23px;
    background-color: #f0f0f0;
    line-height: 24px;
}
.statusbar span {
    border-left: 1px solid #d4d4d4;
    padding-left: 4px;
}
.state {
    width: 171px;
    margin-left: 9px;
}
.hint {
    flex: 1;
}
.extra {
    width: 179px;
}

/* windows taskbar */
.taskbar {
    display: flex;
    height: 40px;
    background-color: #432234;
    color: #fff;
    font-family: "Open Sans", sans-serif;
}
.start {
    width: 48px;
}
.search {
    display: flex;
    align-items: center;
    gap: 10px;
    width: 344px;
    padding: 0 11px;
    border: 1px solid #695f7a;
    background-color: #4e4361;
}
.search input {
    flex: 1;
    font-size: 14px;
}
.search input::placeholder {
    color: #dcd8e2;
    opacity: 1;
}
.app {
    position: relative;
    width: 48px;
    margin-right: 1px;
}
.app[aria-label="Cortana"] {
    margin-right: 0;
}
.app.view {
    margin-right: 3px;
}
.app.open::after {
    content: "";
    position: absolute;
    left: 4px;
    right: 4px;
    bottom: 0;
    height: 3px;
    background-color: #b48ce0;
}
.app.stacked::after {
    background: linear-gradient(90deg, #b48ce0 0 31px, #432234 31px 32px, #7f639c 32px);
}
.app.active {
    background-color: #5c3870;
}
.app.active::after {
    left: 0;
    right: 0;
}
.office {
    font: bold 11px "Liberation Sans", sans-serif;
    fill: #fff;
}
.tray {
    display: flex;
    align-items: center;
    gap: 7px;
    margin-left: auto;
}
.clock {
    display: flex;
    flex-direction: column;
    justify-content: center;
    width: 76px;
    line-height: 18px;
    text-align: center;
    white-space: nowrap;
}
.notifications {
    position: relative;
    width: 46px;
    padding-right: 10px;
}
.badge {
    position: absolute;
    left: 17px;
    top: 20px;
    width: 16px;
    height: 16px;
    border: 1px solid #7b6a9a;
    border-radius: 50%;
    background-color: #3a2a63;
    font: bold 11px/14px "Open Sans", sans-serif;
}
.show-desktop {
    width: 4px;
    border-left: 1px solid #8a7580;
}

/* Change Speed dialog */
.dialog {
    position: absolute;
    left: 50%;
    top: 267px;
    width: 426px;
    margin-left: -213px;
    padding-bottom: 13px;
    border: 1px solid #744da9;
    background-color: #f0f0f0;
    box-shadow: 0 3px 14px rgba(0, 0, 0, 0.5);
}
.dialog-title {
    display: flex;
    align-items: center;
    height: 30px;
    padding: 0 17px 0 8px;
    background-color: #744da9;
    color: #fff;
}
.dialog-buttons {
    display: flex;
    gap: 35px;
    margin-left: auto;
}
.dialog-buttons svg {
    fill: none;
    stroke: #fff;
}
.dialog-heading {
    margin: 11px 0 21px;
    text-align: center;
}
.dialog-row {
    display: flex;
    align-items: center;
    gap: 10px;
    padding-left: 37px;
    white-space: nowrap;
}
.dialog-row input {
    width: 72px;
    height: 23px;
    padding: 0 5px 2px;
    border: 1px solid #7a7a7a;
    background-color: #fff;
}
.dialog-row input:focus {
    outline: none;
    border-color: #0078d7;
}
.dialog-row input::selection {
    background-color: #0078d7;
    color: #fff;
}
.speed-range {
    appearance: none;
    display: block;
    width: 398px;
    height: 20px;
    margin: 12px 13px 10px;
    background: linear-gradient(#d6d6d6 0 1px, #e7eaea 1px 3px, #d6d6d6 3px 4px) 0 8px / 100% 4px no-repeat;
}
.speed-range::-webkit-slider-thumb {
    appearance: none;
    width: 11px;
    height: 19px;
    background-color: #0078d7;
    clip-path: polygon(0 0, 100% 0, 100% 74%, 50% 100%, 0 74%);
}
.dialog-row.rpm {
    padding-left: 21px;
}
.rpm select {
    width: 100px;
    padding-left: 3px;
}
fieldset {
    min-width: 0;
    margin: 11px 5px 15px;
    padding: 0 9px 6px;
    border: 1px solid #dcdcdc;
}
legend {
    padding: 0 1px;
    margin-left: -1px;
}
.length-row {
    display: flex;
    align-items: center;
    height: 33px;
}
.length-row > span {
    width: 97px;
}
.length-row.new > span {
    width: 93px;
}
.actions {
    display: flex;
    align-items: center;
    padding: 0 14px;
}
.actions button {
    width: 73px;
    height: 21px;
    margin-right: 7px;
    border: 1px solid #adadad;
    background-color: #e1e1e1;
}
.actions .ok {
    margin: 0 10px 0 auto;
    border: 2px solid #0078d7;
}
.actions .ok + button {
    margin-right: 10px;
}
.actions .help {
    width: 27px;
    height: 27px;
    margin: 0;
}
.help span {
    width: 21px;
    height: 21px;
    border-radius: 50%;
    background-color: #6496ff;
    color: #fff;
    font-size: 17px;
    font-weight: 600;
    line-height: 21px;
}
```
FILE: script.js
```js
// x, peak above, peak below, rms
const envelope = [
    [126, 4, 5, 4], [164, 21, 19, 12], [187, 19, 13, 11], [217, 8, 7, 6], [233, 24, 20, 14],
    [253, 42, 36, 22], [271, 31, 26, 16], [290, 21, 13, 10], [309, 8, 8, 6], [328, 24, 24, 14],
    [344, 31, 29, 17], [352, 34, 27, 16], [367, 17, 16, 10], [382, 12, 11, 8], [405, 11, 9, 7],
    [420, 24, 24, 14], [436, 31, 30, 18], [451, 28, 24, 14], [470, 17, 11, 9], [501, 12, 9, 6],
    [512, 18, 16, 9], [529, 27, 30, 17], [547, 18, 20, 9], [573, 6, 6, 4], [596, 11, 9, 6],
    [627, 28, 23, 15], [654, 14, 13, 8], [684, 8, 8, 5], [692, 8, 8, 5], [715, 24, 20, 13],
    [723, 27, 27, 17], [746, 14, 12, 7], [765, 7, 7, 4], [788, 11, 9, 6], [809, 34, 31, 19],
    [830, 27, 21, 12], [846, 13, 17, 9], [869, 22, 20, 9], [884, 18, 20, 8], [905, 25, 27, 15],
    [922, 15, 14, 8], [938, 7, 9, 5], [961, 10, 7, 5], [991, 6, 6, 4], [1014, 9, 7, 5],
    [1033, 18, 21, 11], [1045, 17, 18, 10], [1064, 11, 9, 6], [1079, 5, 5, 4], [1106, 5, 5, 3],
    [1160, 3, 3, 2], [1202, 6, 5, 3], [1265, 3, 3, 2], [1285, 4, 3, 2]
];

function levelAt(x, channel) {
    for (let i = 1; i < envelope.length; i++) {
        const a = envelope[i - 1];
        const b = envelope[i];
        if (x <= b[0]) {
            return a[channel] + (b[channel] - a[channel]) * (x - a[0]) / (b[0] - a[0]);
        }
    }
    return 2;
}

function drawWave(svg) {
    const middle = 71;
    let seed = 17;
    const random = () => (seed = (seed * 16807) % 2147483647) / 2147483647;
    let peaks = 'M0 71h126v1H0z';
    let rms = '';
    for (let x = 126; x < 1285; x++) {
        const spike = random();
        const up = Math.round(levelAt(x, 1) * (0.72 + 0.4 * spike * spike));
        const down = Math.round(levelAt(x, 2) * (0.8 + 0.3 * random()));
        const mid = Math.round(levelAt(x, 3) * (0.94 + 0.1 * random()));
        peaks += `M${x} ${middle - up}h1v${up + down}h-1z`;
        rms += `M${x} ${middle - mid}h1v${mid * 2}h-1z`;
    }
    svg.innerHTML = `<path class="peaks" d="${peaks}"/><path class="rms" d="${rms}"/>`;
}

// one cell for each digit or unit letter
function fillTime(box) {
    const names = { h: 'h', m: 'm', s: 's', '.': 'dot' };
    box.innerHTML = [...box.dataset.value].map(c => `<span class="${names[c] || 'digit'}">${c}</span>`).join('');
    if (box.dataset.menu) {
        box.innerHTML += '<button type="button" aria-label="Format"><svg width="8" height="5"><path d="M0 0h8L4 5z"/></svg></button>';
    }
}

const ruler = document.getElementById('timeRuler');
for (let i = -1; i < 30; i++) {
    const label = (i < 0 ? '- ' : '') + (Math.abs(i) / 10).toFixed(2);
    ruler.innerHTML += `<span>${label}</span>`;
}

document.querySelectorAll('.wave').forEach(drawWave);
document.querySelectorAll('.time').forEach(fillTime);

const multiplier = document.getElementById('multiplier');
multiplier.focus();
multiplier.select();
```
